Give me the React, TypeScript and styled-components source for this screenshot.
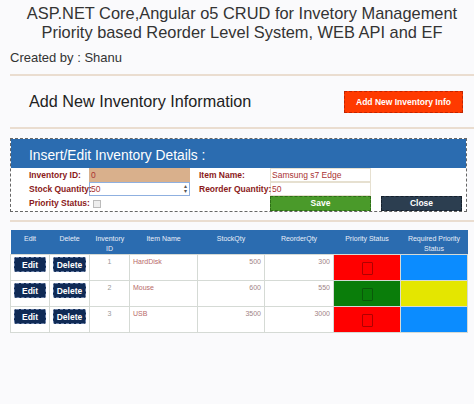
import styled, { createGlobalStyle } from 'styled-components'

const GlobalStyle = createGlobalStyle`
  html, body {
    margin: 0;
    padding: 0;
    background: #fafafc;
    font-family: "Liberation Sans", Arial, sans-serif;
  }
`

const Page = styled.div`
  width: 474px;
  height: 404px;
  padding-left: 10px;
  box-sizing: border-box;
  overflow: hidden;
`

const Heading = styled.h1`
  margin: 0;
  padding-top: 4px;
  font-size: 16.4px;
  line-height: 19px;
  font-weight: normal;
  color: #333;
  text-align: center;
`

const Author = styled.div`
  margin-top: 8px;
  font-size: 13px;
  line-height: 15px;
  color: #333;
`

const Rule = styled.hr`
  margin: 0;
  border: none;
  border-top: 2px solid #eaddd0;
`

const TopRule = styled(Rule)`
  margin-top: 9px;
`

const ActionBar = styled.div`
  display: flex;
  align-items: center;
  justify-content: space-between;
  height: 51px;
  padding: 0 11px 0 19px;
`

const SectionTitle = styled.h2`
  margin: 0;
  font-size: 16.2px;
  font-weight: normal;
  color: #222;
`

const AddButton = styled.button`
  width: 119px;
  height: 22px;
  background: #ff3a00;
  border: 1px dashed #c22400;
  color: #fff;
  font-family: inherit;
  font-size: 8.5px;
  font-weight: bold;
  padding: 0;
`

const Panel = styled.div`
  margin: 9px 7px 0 0;
  border: 1px dashed #666;
  background: #fff;
`

const PanelHeader = styled.div`
  height: 29px;
  background: #2b6cb0;
  color: #fff;
  font-size: 13.8px;
  padding: 9px 0 0 18px;
  box-sizing: border-box;
`

const FormGrid = styled.div`
  display: grid;
  grid-template-columns: 60px 101px 9px 71px 101px 10px 81px;
  grid-template-rows: 14px 14px 14px;
  padding: 0 0 1px 18px;
  align-items: center;
`

const Label = styled.label`
  position: relative;
  z-index: 1;
  font-size: 8.5px;
  font-weight: bold;
  color: #8b1a1a;
  white-space: nowrap;
`

const Field = styled.div<{ $bg?: string; $border?: string }>`
  height: 14px;
  box-sizing: border-box;
  background: ${(p) => p.$bg || '#fff'};
  border: 1px solid ${(p) => p.$border || '#e6e0d0'};
  font-size: 8.5px;
  color: #a33;
  display: flex;
  align-items: center;
  justify-content: space-between;
  padding: 0 2px 0 1px;
`

const Spin = styled.span`
  font-size: 6px;
  color: #555;
  line-height: 5px;
  display: flex;
  flex-direction: column;
`

const CheckBox = styled.span`
  display: inline-block;
  width: 6px;
  height: 6px;
  border: 1px solid #bbb;
  background: #eee;
  margin-left: 3px;
  vertical-align: middle;
`

const SaveButton = styled.div`
  height: 13px;
  background: #4a9a2a;
  border: 1px dashed #2d6e16;
  color: #fff;
  font-size: 8.5px;
  font-weight: bold;
  display: flex;
  align-items: center;
  justify-content: center;
`

const CloseButton = styled(SaveButton)`
  background: #2c3e50;
  border-color: #15202c;
`

const MidRule = styled(Rule)`
  margin-top: 8px;
`

const Table = styled.table`
  margin-top: 8px;
  width: 457px;
  border-collapse: collapse;
  table-layout: fixed;
  background: #fff;
`

const Th = styled.th<{ $w: number }>`
  width: ${(p) => p.$w}px;
  box-sizing: border-box;
  height: 24px;
  background: #2b6cb0;
  color: #e8eef8;
  font-size: 7px;
  font-weight: normal;
  vertical-align: top;
  padding: 4px 6px 0;
  line-height: 10px;
`

const Td = styled.td<{ $align?: string; $color?: string; $bg?: string }>`
  height: 26px;
  box-sizing: border-box;
  border: 1px solid #d5dad5;
  vertical-align: top;
  padding: 3px 3px 0;
  font-size: 7px;
  text-align: ${(p) => p.$align || 'left'};
  color: ${(p) => p.$color || '#999'};
  background: ${(p) => p.$bg || '#fff'};
`

const RowButton = styled.div`
  height: 13px;
  margin-top: -1px;
  background: #0f2a55;
  border: 1px dashed #6a80a8;
  border-radius: 2px;
  color: #fff;
  font-size: 8.5px;
  font-weight: bold;
  display: flex;
  align-items: center;
  justify-content: center;
`

const StatusBox = styled.span<{ $tone: string }>`
  display: block;
  width: 9px;
  height: 11px;
  margin: 4px auto 0;
  border: 1px solid ${(p) => p.$tone};
  border-radius: 1px;
`

const items = [
  { id: 1, name: 'HardDisk', stock: 500, reorder: 300, ok: false, need: '#0b8cff' },
  { id: 2, name: 'Mouse', stock: 600, reorder: 550, ok: true, need: '#e4e600' },
  { id: 3, name: 'USB', stock: 3500, reorder: 3000, ok: false, need: '#0b8cff' },
]

const columns: [string, number][] = [
  ['Edit', 39],
  ['Delete', 40],
  ['Inventory ID', 40],
  ['Item Name', 68],
  ['StockQty', 67],
  ['ReorderQty', 69],
  ['Priority Status', 67],
  ['Required Priority Status', 67],
]

export default function App() {
  return (
    <Page>
      <GlobalStyle />
      <Heading>
        ASP.NET Core,Angular o5 CRUD for Invetory Management
        <br />
        Priority based Reorder Level System, WEB API and EF
      </Heading>
      <Author>Created by : Shanu</Author>
      <TopRule />

      <ActionBar>
        <SectionTitle>Add New Inventory Information</SectionTitle>
        <AddButton>Add New Inventory Info</AddButton>
      </ActionBar>
      <Rule />

      <Panel>
        <PanelHeader>Insert/Edit Inventory Details :</PanelHeader>
        <FormGrid>
          <Label>Inventory ID:</Label>
          <Field $bg="#d9b08c" $border="#d9b08c">0</Field>
          <span />
          <Label>Item Name:</Label>
          <Field>Samsung s7 Edge</Field>
          <span />
          <span />

          <Label>Stock Quantity:</Label>
          <Field $border="#8fb0e0">
            50
            <Spin>
              <span>▴</span>
              <span>▾</span>
            </Spin>
          </Field>
          <span />
          <Label>Reorder Quantity:</Label>
          <Field>50</Field>
          <span />
          <span />

          <Label>
            Priority Status:
            <CheckBox />
          </Label>
          <span />
          <span />
          <span />
          <SaveButton>Save</SaveButton>
          <span />
          <CloseButton>Close</CloseButton>
        </FormGrid>
      </Panel>
      <MidRule />

      <Table>
        <thead>
          <tr>
            {columns.map(([label, w]) => (
              <Th key={label} $w={w}>
                {label}
              </Th>
            ))}
          </tr>
        </thead>
        <tbody>
          {items.map((it) => (
            <tr key={it.id}>
              <Td>
                <RowButton>Edit</RowButton>
              </Td>
              <Td>
                <RowButton>Delete</RowButton>
              </Td>
              <Td $align="center">{it.id}</Td>
              <Td $color="#b86a6a">{it.name}</Td>
              <Td $align="right" $color="#a08585">{it.stock}</Td>
              <Td $align="right" $color="#a08585">{it.reorder}</Td>
              <Td $bg={it.ok ? '#0a7d0a' : '#ff0000'}>
                <StatusBox $tone={it.ok ? '#0a5a0a' : '#b00000'} />
              </Td>
              <Td $bg={it.need} />
            </tr>
          ))}
        </tbody>
      </Table>
    </Page>
  )
}
